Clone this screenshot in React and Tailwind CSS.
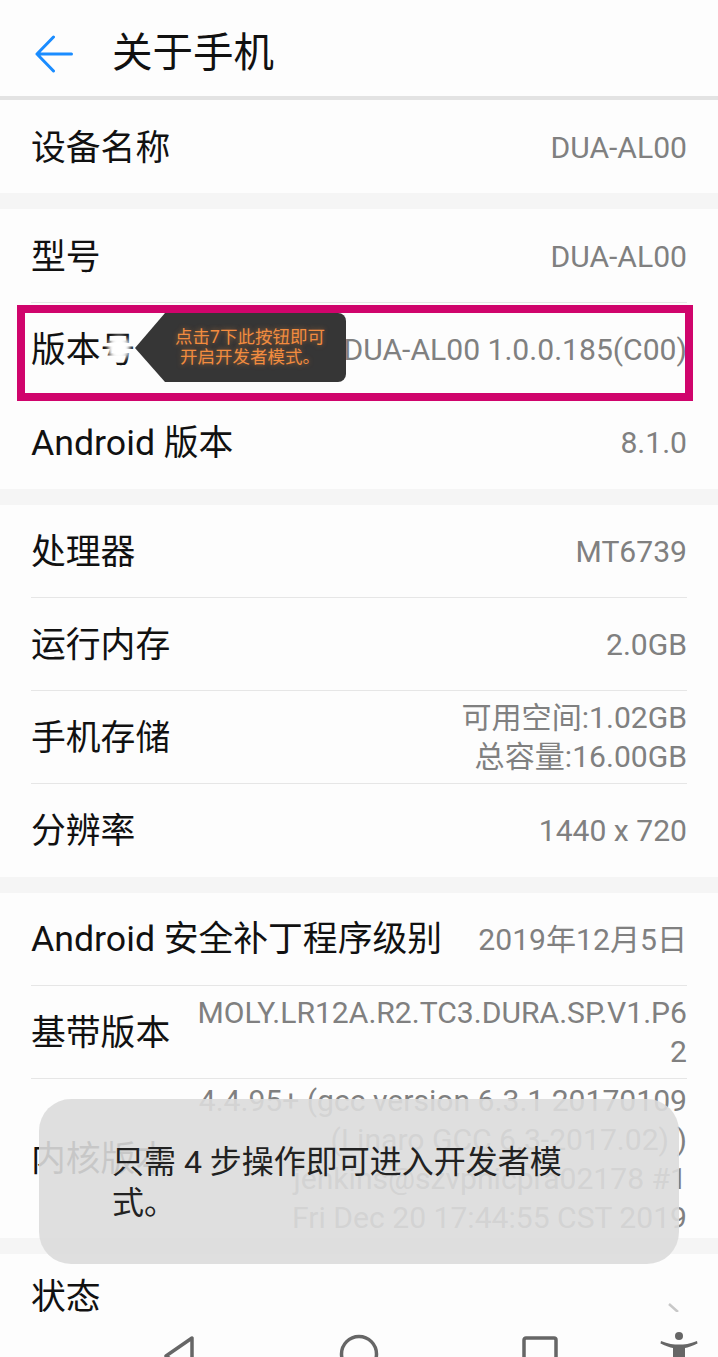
const FONT = "font-['Roboto','Noto_Sans_CJK_SC',sans-serif]"

function Row({ label, value, height, last, nudge, children }) {
  return (
    <div className="px-[31px]">
      <div
        className={`flex items-center justify-between ${height} ${nudge ? 'pt-[2px]' : ''} ${last ? '' : 'border-b border-[#e6e6e6]'}`}
      >
        <span className="text-[34.8px] leading-none text-[#111] whitespace-nowrap mt-[2px]">{label}</span>
        {children || (
          <span className="text-[30.1px] leading-[39px] text-[#808080] text-right whitespace-nowrap">{value}</span>
        )}
      </div>
    </div>
  )
}

function Gap() {
  return <div className="h-4 bg-[#f5f5f5]" />
}

function Tooltip() {
  return (
    <div className="absolute left-[135px] top-[313px] flex h-[69px]">
      <svg width="31" height="69" viewBox="0 0 31 69" className="block">
        <path d="M31 0H30L0 35L30 69H31Z" fill="#363636" />
      </svg>
      <div className="w-[180px] bg-[#363636] rounded-r-lg flex flex-col justify-center items-center pr-[12px] pb-px text-[17.5px] leading-[20px] font-normal text-[#f28c3f] [text-shadow:0_0_5px_rgba(240,140,60,0.55)]">
        <span className="whitespace-nowrap">点击7下此按钮即可</span>
        <span className="whitespace-nowrap">开启开发者模式。</span>
      </div>
    </div>
  )
}

function NavBar() {
  return (
    <div className="absolute left-0 right-0 top-[1312px] h-[45px] bg-[#fdfdfd] overflow-hidden flex items-start pl-[163px] pt-[22px] text-[#666]">
      <svg width="32" height="30" viewBox="0 0 32 30" fill="none" stroke="currentColor" strokeWidth="3.5" strokeLinejoin="round">
        <path d="M29 4V40L3 22Z" />
      </svg>
      <svg width="40" height="40" viewBox="0 0 40 40" fill="none" stroke="currentColor" strokeWidth="3.5" className="ml-[144px]">
        <circle cx="20" cy="20" r="17.5" />
      </svg>
      <svg width="36" height="36" viewBox="0 0 36 36" fill="none" stroke="currentColor" strokeWidth="3.5" strokeLinejoin="round" className="ml-[143px] mt-[2px]">
        <rect x="2" y="2" width="32" height="32" rx="2" />
      </svg>
      <svg width="38" height="36" viewBox="0 0 38 36" fill="currentColor" className="ml-[102px] -mt-[2px]">
        <circle cx="19" cy="4" r="4" />
        <path d="M1 9C8 12 14 12.500 19 12.500C24 12.500 30 12 37 9L37.500 11.500C32 14 28 15.500 25 16V36H13V16C10 15.500 6 14 .5 11.500Z" />
      </svg>
    </div>
  )
}

export default function App() {
  const android = <span className="text-[35.7px]">Android</span>

  return (
    <div className={`relative w-[718px] h-[1357px] overflow-hidden bg-[#fdfdfd] ${FONT}`}>
      {/* title bar */}
      <div className="h-[96px] flex items-center pl-[35px] pt-[14px]">
        <svg width="38" height="38" viewBox="0 0 38 38" fill="none" stroke="#1a8cff" strokeWidth="3" strokeLinecap="round" strokeLinejoin="round" className="-mt-[2px]">
          <path d="M18.500 2L2 19L18.500 36M2 19H36.500" />
        </svg>
        <h1 className="ml-[39px] text-[40.5px] leading-none font-normal text-[#111] -mt-[3px]">关于手机</h1>
      </div>
      <div className="h-1 bg-[#e3e3e3]" />

      <Row label="设备名称" value="DUA-AL00" height="h-[93px]" last nudge />
      <Gap />
      <Row label="型号" value="DUA-AL00" height="h-[94px]" nudge />
      <Row label="版本号" value="DUA-AL00 1.0.0.185(C00)" height="h-[93px]" last />
      <Row label={<>{android} 版本</>} value="8.1.0" height="h-[93px]" last />
      <Gap />
      <Row label="处理器" value="MT6739" height="h-[93px]" />
      <Row label="运行内存" value="2.0GB" height="h-[93px]" />
      <Row label="手机存储" height="h-[93px]">
        <span className="text-[30.1px] leading-[39px] text-[#808080] text-right whitespace-nowrap">
          可用空间:1.02GB<br />总容量:16.00GB
        </span>
      </Row>
      <Row label="分辨率" value="1440 x 720" height="h-[93px]" last />
      <Gap />
      <Row label={<>{android} 安全补丁程序级别</>} value="2019年12月5日" height="h-[93px]" />
      <Row label="基带版本" height="h-[93px]">
        <span className="text-[30.1px] leading-[39px] text-[#808080] text-right whitespace-nowrap">
          MOLY.LR12A.R2.TC3.DURA.SP.V1.P6<br />2
        </span>
      </Row>
      <Row label="内核版本" height="h-[159px]" last>
        <span className="text-[30.1px] leading-[39px] text-[#808080] text-right whitespace-nowrap">
          4.4.95+ (gcc version 6.3.1 20170109<br />
          (Linaro GCC 6.3-2017.02) )<br />
          jenkins@szvphicpra02178 #1<br />
          Fri Dec 20 17:44:55 CST 2019
        </span>
      </Row>
      <Gap />
      <div className="px-[31px] h-[84px] flex items-center justify-between">
        <span className="text-[34.8px] leading-none text-[#111] mt-[2px]">状态</span>
        <svg width="12" height="12" viewBox="0 0 12 12" fill="none" stroke="#c8c8c8" strokeWidth="2.5" className="mr-[7px] mt-[25px]">
          <path d="M1 1L10 9" />
        </svg>
      </div>

      {/* highlight box + smudge over the 号 glyph */}
      <div className="absolute left-[17px] top-[305px] w-[676px] h-[96px] border-[8px] border-[#d0046c]" />
      <div className="absolute left-[108px] top-[336px] w-[22px] h-[24px] rounded-full bg-white blur-[2px]" />
      <Tooltip />

      <NavBar />

      {/* toast */}
      <div className="absolute left-[39px] top-[1099px] w-[640px] h-[165px] rounded-[32px] bg-[#dcdcdc]/90 pl-[73px] pr-[100px] pt-[43px]">
        <p className="text-[32px] leading-[41px] text-[#222]">只需 4 步操作即可进入开发者模式。</p>
      </div>
    </div>
  )
}
